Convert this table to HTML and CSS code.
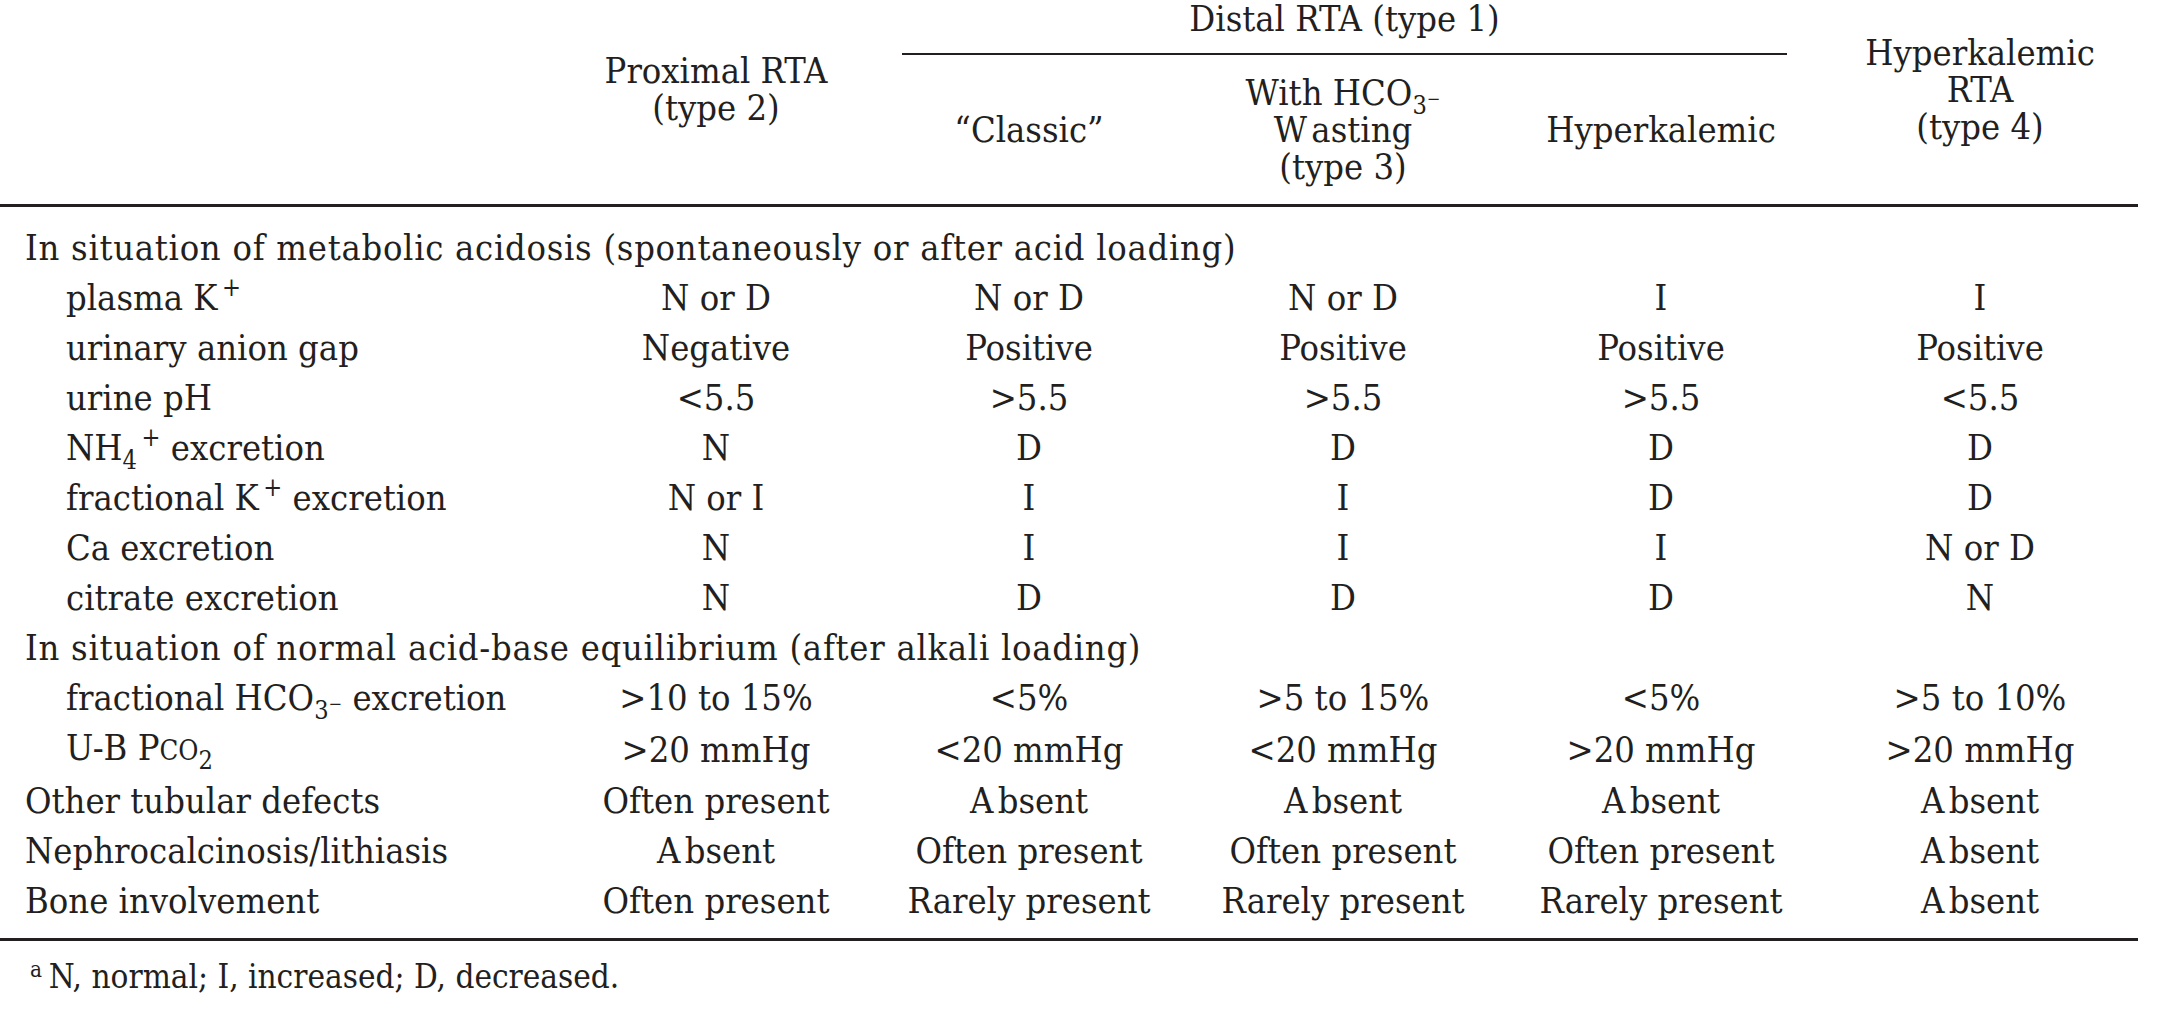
FILE: index.html
```html
<!DOCTYPE html>
<html lang="en">
<head>
<meta charset="utf-8">
<title>Renal tubular acidosis</title>
<link rel="stylesheet" href="styles.css">
</head>
<body>
<table class="rta">
  <colgroup>
    <col class="c-label">
    <col class="c-1">
    <col class="c-2">
    <col class="c-3">
    <col class="c-4">
    <col class="c-5">
  </colgroup>
  <thead>
    <tr class="h-top">
      <th rowspan="2" class="blank"></th>
      <th rowspan="2" class="side">Proximal RTA<br>(type 2)</th>
      <th colspan="3" class="group"><div class="group-title">Distal RTA (type 1)</div></th>
      <th rowspan="2" class="side">Hyperkalemic<br>RTA<br>(type 4)</th>
    </tr>
    <tr class="h-sub">
      <th>“Classic”</th>
      <th>With HCO<span class="sub">3</span><span class="minus">−</span><br><span class="gapA">W</span>asting<br>(type 3)</th>
      <th>Hyperkalemic</th>
    </tr>
  </thead>
  <tbody>
    <tr class="section first"><td colspan="6">In situation of metabolic acidosis (spontaneously or after acid loading)</td></tr>
    <tr><td class="lab">plasma K<span class="sup plus">+</span></td><td>N or D</td><td>N or D</td><td>N or D</td><td>I</td><td>I</td></tr>
    <tr><td class="lab">urinary anion gap</td><td>Negative</td><td>Positive</td><td>Positive</td><td>Positive</td><td>Positive</td></tr>
    <tr><td class="lab">urine pH</td><td>&lt;5.5</td><td>&gt;5.5</td><td>&gt;5.5</td><td>&gt;5.5</td><td>&lt;5.5</td></tr>
    <tr><td class="lab">NH<span class="sub">4</span><span class="sup plus">+</span> excretion</td><td>N</td><td>D</td><td>D</td><td>D</td><td>D</td></tr>
    <tr><td class="lab">fractional K<span class="sup plus">+</span> excretion</td><td>N or I</td><td>I</td><td>I</td><td>D</td><td>D</td></tr>
    <tr><td class="lab">Ca excretion</td><td>N</td><td>I</td><td>I</td><td>I</td><td>N or D</td></tr>
    <tr><td class="lab">citrate excretion</td><td>N</td><td>D</td><td>D</td><td>D</td><td>N</td></tr>
    <tr class="section"><td colspan="6">In situation of normal acid-base equilibrium (after alkali loading)</td></tr>
    <tr><td class="lab">fractional HCO<span class="sub">3</span><span class="minus">−</span> excretion</td><td>&gt;10 to 15%</td><td>&lt;5%</td><td>&gt;5 to 15%</td><td>&lt;5%</td><td>&gt;5 to 10%</td></tr>
    <tr><td class="lab">U-B P<span class="sc">CO</span><span class="sub">2</span></td><td>&gt;20 mmHg</td><td>&lt;20 mmHg</td><td>&lt;20 mmHg</td><td>&gt;20 mmHg</td><td>&gt;20 mmHg</td></tr>
    <tr><td class="top-lab">Other tubular defects</td><td>Often present</td><td><span class="gapA">A</span>bsent</td><td><span class="gapA">A</span>bsent</td><td><span class="gapA">A</span>bsent</td><td><span class="gapA">A</span>bsent</td></tr>
    <tr><td class="top-lab">Nephrocalcinosis/lithiasis</td><td><span class="gapA">A</span>bsent</td><td>Often present</td><td>Often present</td><td>Often present</td><td><span class="gapA">A</span>bsent</td></tr>
    <tr class="last"><td class="top-lab">Bone involvement</td><td>Often present</td><td>Rarely present</td><td>Rarely present</td><td>Rarely present</td><td><span class="gapA">A</span>bsent</td></tr>
  </tbody>
</table>
<p class="footnote"><span class="fn-mark">a</span>N, normal; I, increased; D, decreased.</p>
</body>
</html>
```

FILE: styles.css
```css
html, body {
  margin: 0;
  padding: 0;
  background: #ffffff;
}

body {
  font-family: "DejaVu Serif Condensed", "DejaVu Serif", "Liberation Serif", serif;
  font-stretch: condensed;
  font-size: 36px;
  color: #231f20;
}

.rta {
  border-collapse: collapse;
  table-layout: fixed;
  width: 2138px;
}

.c-label { width: 560px; }
.c-1 { width: 312px; }
.c-2 { width: 314px; }
.c-3 { width: 314px; }
.c-4 { width: 322px; }
.c-5 { width: 316px; }

.rta th {
  font-weight: normal;
  text-align: center;
  line-height: 37px;
  padding: 0;
}

.rta thead {
  border-bottom: 3px solid #231f20;
}

.rta th.side {
  vertical-align: middle;
  padding-bottom: 26px;
}

.rta th.group {
  vertical-align: top;
  padding: 0;
}

.group-title {
  margin: 0 35px 0 30px;
  line-height: 37px;
  padding-bottom: 16px;
  border-bottom: 2px solid #231f20;
}

.h-sub th {
  height: 149px;
  vertical-align: middle;
}

.rta td {
  padding: 0;
  line-height: 50px;
  text-align: center;
  white-space: nowrap;
}

.rta td.lab {
  text-align: left;
  padding-left: 66px;
}

.rta td.top-lab {
  text-align: left;
  padding-left: 25px;
}

.rta tr.section td {
  text-align: left;
  padding-left: 25px;
  letter-spacing: 0.02em;
}

.rta tr.first td {
  padding-top: 16px;
}

.rta tr.last td {
  padding-bottom: 12px;
}

.rta tbody {
  border-bottom: 3px solid #231f20;
}

.sub {
  font-size: 0.7em;
  line-height: 0;
  vertical-align: -0.34em;
}

.sup {
  font-size: 0.7em;
  line-height: 0;
  vertical-align: 0.55em;
}

.plus {
  margin-left: 0.18em;
}

.minus {
  font-size: 0.5em;
  line-height: 0;
}

.sc {
  font-size: 0.76em;
}

.gapA {
  margin-right: 0.12em;
}

.footnote {
  margin: 16px 0 0 30px;
  font-size: 33px;
  line-height: 40px;
}

.fn-mark {
  font-size: 0.68em;
  line-height: 0;
  vertical-align: 0.5em;
  margin-right: 0.3em;
}
```
